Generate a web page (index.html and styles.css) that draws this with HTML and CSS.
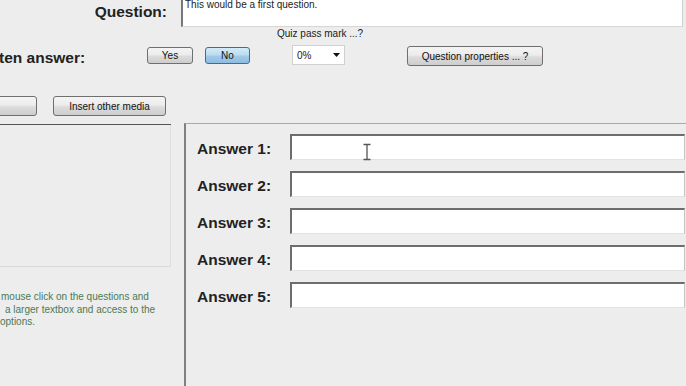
FILE: index.html
```html
<!DOCTYPE html>
<html>
<head>
<meta charset="utf-8">
<link rel="stylesheet" href="styles.css">
</head>
<body>
<div class="app">
  <div class="row-q">
    <div class="q-label">Question:</div>
    <div class="q-box"><span class="q-text">This would be a first question.</span></div>
  </div>
  <div class="row-opts">
    <div class="wa-label">ten answer:</div>
    <button class="btn yes">Yes</button>
    <button class="btn no">No</button>
    <div class="pass">
      <div class="pass-label">Quiz pass mark ...?</div>
      <div class="select"><span>0%</span><svg class="arrow" width="7" height="4" viewBox="0 0 7 4"><polygon points="0,0 7,0 3.5,4" fill="#111"/></svg></div>
    </div>
    <button class="btn props">Question properties ... ?</button>
  </div>
  <div class="row-media">
    <button class="btn clip" aria-label="Insert picture"></button>
    <button class="btn media">Insert other media</button>
  </div>
  <div class="main">
    <div class="left-panel">
      <div class="list"></div>
      <div class="hint">
        <div class="l1">mouse click on the questions and</div>
        <div class="l2">a larger textbox and access to the</div>
        <div class="l3">options.</div>
      </div>
    </div>
    <div class="answers">
      <div class="ans-row"><div class="ans-label">Answer 1:</div><div class="ans-box"></div></div>
      <div class="ans-row"><div class="ans-label">Answer 2:</div><div class="ans-box"></div></div>
      <div class="ans-row"><div class="ans-label">Answer 3:</div><div class="ans-box"></div></div>
      <div class="ans-row"><div class="ans-label">Answer 4:</div><div class="ans-box"></div></div>
      <div class="ans-row"><div class="ans-label">Answer 5:</div><div class="ans-box"></div></div>
    </div>
  </div>
  <svg class="ibeam" width="10" height="18" viewBox="0 0 10 18"><path d="M1.5 1.5h7M5 1.5v15M1.5 16.5h7" stroke="#555" stroke-width="1.3" fill="none"/></svg>
</div>
</body>
</html>
```
FILE: styles.css
```css
html, body { margin: 0; padding: 0; }
body { background: #ededed; }
.app {
  width: 686px; height: 386px; overflow: hidden; position: relative;
  background: #ededed;
  font-family: "Liberation Sans", Arial, sans-serif;
  color: #1a1a1a;
}
.row-q { display: flex; height: 27px; }
.q-label {
  width: 181px; box-sizing: border-box; padding-right: 14px; padding-top: 3px;
  text-align: right; font-weight: bold; font-size: 15.5px; line-height: 18px; color: #222;
}
.q-box {
  flex: 1; margin-right: 3px; height: 27px; box-sizing: border-box;
  background: #fff; border-left: 2px solid #777; border-bottom: 1px solid #d6d6d6; border-right: 1px solid #cfcfcf;
  padding-left: 2px; overflow: hidden;
}
.q-text { font-size: 10px; line-height: 10px; color: #222; display: block; }

.row-opts { display: flex; height: 69px; align-items: flex-start; }
.wa-label {
  width: 148px; margin-left: -1px; margin-top: 22px; flex: none;
  font-weight: bold; font-size: 15.5px; line-height: 18px; color: #222; white-space: nowrap;
}
.btn {
  font-family: "Liberation Sans", Arial, sans-serif; font-size: 10px; color: #111;
  border: 1px solid #6f6f6f; border-radius: 3px; padding: 0; box-sizing: border-box;
  background: linear-gradient(#f4f4f4 0%, #ececec 45%, #dcdcdc 55%, #cdcdcd 100%);
  flex: none; white-space: nowrap; overflow: hidden;
}
.yes { width: 46px; height: 17px; margin-top: 20px; }
.no {
  width: 45px; height: 17px; margin-top: 20px; margin-left: 12px;
  border-color: #3a6f96;
  background: linear-gradient(#d4ebf8 0%, #bcdcf0 45%, #a0cae8 55%, #8dbde0 100%);
}
.pass { width: 88px; margin-left: 27px; margin-top: 1px; flex: none; }
.pass-label { font-size: 10px; line-height: 12px; color: #222; white-space: nowrap; }
.select {
  margin-top: 5px; margin-left: 15px; width: 53px; height: 20px; box-sizing: border-box;
  background: #fff; border: 1px solid #d0d0d0;
  display: flex; align-items: center; justify-content: space-between;
  padding: 0 4px 0 4px; font-size: 10px; color: #222;
}
.arrow { display: block; }
.props { width: 136px; height: 20px; margin-top: 19px; margin-left: 42px; }

.row-media { display: flex; height: 27px; align-items: flex-start; }
.clip { width: 140px; height: 20px; margin-left: -103px; }
.media { width: 113px; height: 20px; margin-left: 16px; }

.main { display: flex; height: 263px; }
.left-panel { width: 171px; flex: none; margin-top: 1px; border-top: 1px solid #555; }
.list { height: 141px; border-bottom: 1px solid #d9d9d9; border-right: 1px solid #dedede; }
.hint { padding-top: 24px; font-size: 10px; line-height: 12.5px; color: #4b7a55; white-space: nowrap; }
.l1 { margin-left: 1px; }
.l2 { margin-left: 5px; }
.l3 { margin-left: 0; }

.answers {
  flex: 1; margin-left: 13px; border-left: 2px solid #808080; border-top: 1px solid #a9a9a9;
  padding: 10px 0 0 11px;
}
.ans-row { display: flex; height: 26px; margin-bottom: 11px; }
.ans-label {
  width: 93px; flex: none; padding-top: 6px;
  font-weight: bold; font-size: 15.5px; line-height: 18px; color: #222; white-space: nowrap;
}
.ans-box {
  flex: 1; height: 26px; box-sizing: border-box; background: #fff;
  border-top: 2px solid #6d6d6d; border-left: 2px solid #6d6d6d;
  border-bottom: 1px solid #e2e2e2; border-right: 1px solid #c4c4c4; margin-right: 1px;
}
.ibeam { position: absolute; left: 362px; top: 143px; }
```
